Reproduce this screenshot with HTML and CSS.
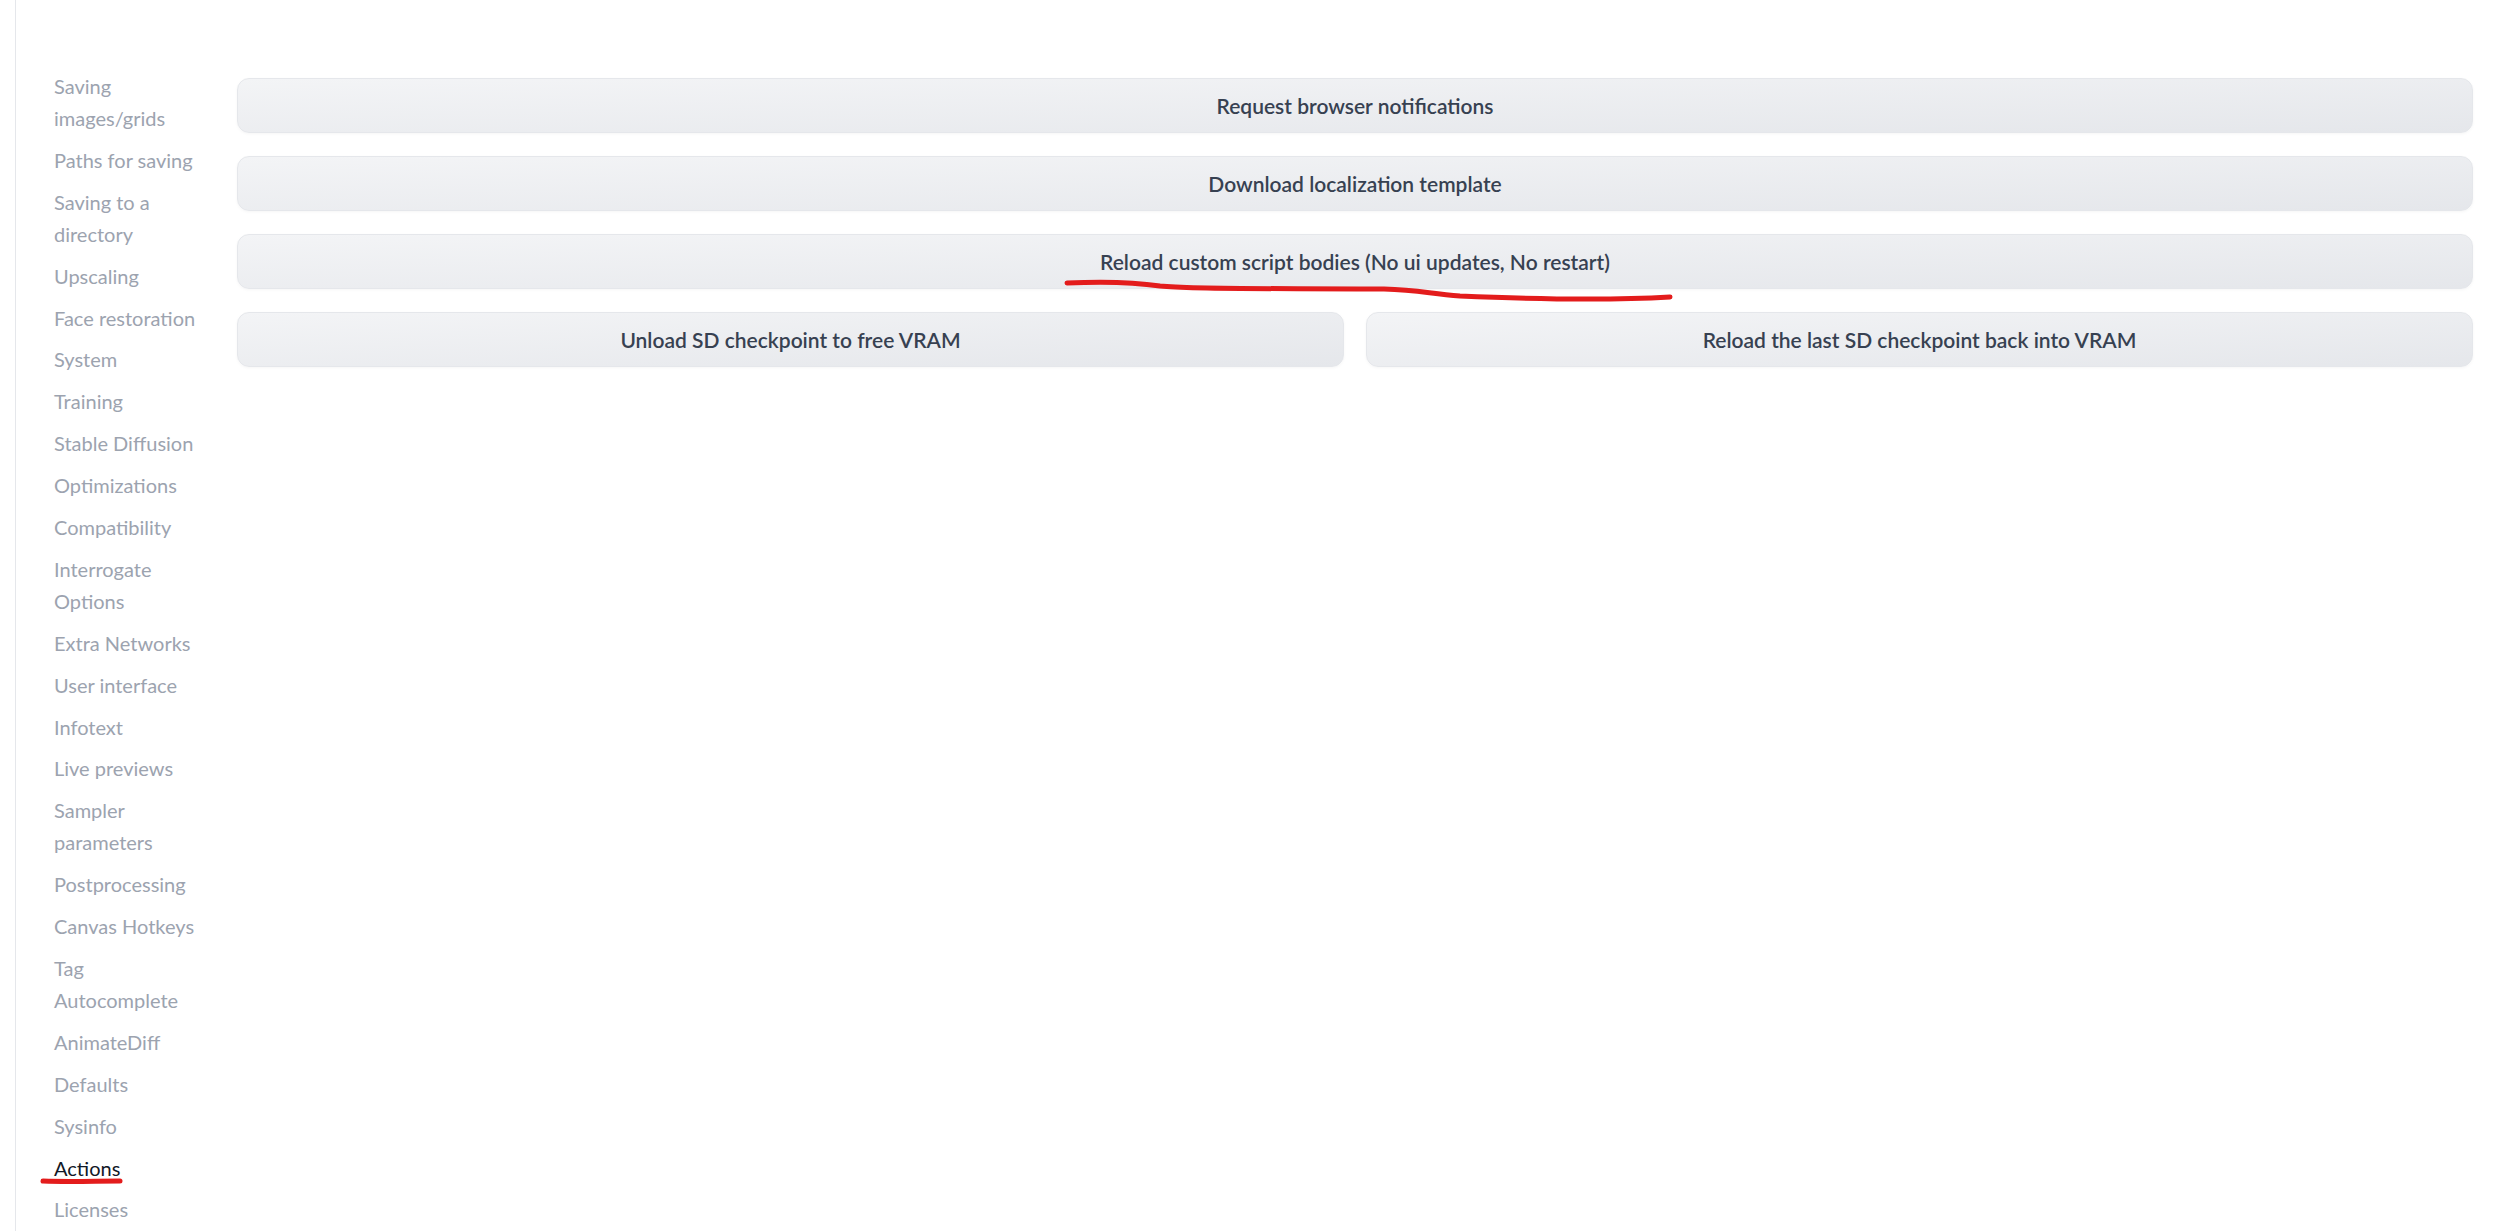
FILE: index.html
```html
<!DOCTYPE html>
<html lang="en">
<head>
    <meta charset="UTF-8">
    <title>Settings - Actions</title>
    <link rel="stylesheet" href="styles.css">
</head>
<body>
    <div class="settings">
        <nav class="settings-nav">
            <a class="nav-item">Saving images/grids</a>
            <a class="nav-item">Paths for saving</a>
            <a class="nav-item">Saving to a directory</a>
            <a class="nav-item">Upscaling</a>
            <a class="nav-item">Face restoration</a>
            <a class="nav-item">System</a>
            <a class="nav-item">Training</a>
            <a class="nav-item">Stable Diffusion</a>
            <a class="nav-item">Optimizations</a>
            <a class="nav-item">Compatibility</a>
            <a class="nav-item">Interrogate Options</a>
            <a class="nav-item">Extra Networks</a>
            <a class="nav-item">User interface</a>
            <a class="nav-item">Infotext</a>
            <a class="nav-item">Live previews</a>
            <a class="nav-item">Sampler parameters</a>
            <a class="nav-item">Postprocessing</a>
            <a class="nav-item">Canvas Hotkeys</a>
            <a class="nav-item">Tag Autocomplete</a>
            <a class="nav-item">AnimateDiff</a>
            <a class="nav-item">Defaults</a>
            <a class="nav-item">Sysinfo</a>
            <a class="nav-item active">Actions</a>
            <a class="nav-item">Licenses</a>
        </nav>

        <main class="actions">
            <button class="btn">Request browser notifications</button>
            <button class="btn">Download localization template</button>
            <button class="btn">Reload custom script bodies (No ui updates, No restart)</button>
            <div class="btn-row">
                <button class="btn">Unload SD checkpoint to free VRAM</button>
                <button class="btn">Reload the last SD checkpoint back into VRAM</button>
            </div>
        </main>
    </div>

    <!-- hand-drawn red marks on top of the screenshot -->
    <svg class="marks" width="2506" height="1231" viewBox="0 0 2506 1231">
        <path d="M1067 283 C1110 281 1140 283 1160 286 C1200 290 1300 288 1384 289 C1420 290 1430 294 1460 296 C1530 299 1600 301 1670 297" />
        <path d="M43 1181 C70 1182 95 1181 120 1181" />
    </svg>
</body>
</html>
```

FILE: styles.css
```css
html {
    overflow: hidden;
}

body {
    margin: 0;
    font-family: Lato, "Noto Sans", sans-serif;
    background-color: #fff;
    color: #374151;
}

.settings {
    display: flex;
    align-items: flex-start;
    margin-left: 15px;
    border-left: 1px solid #e5e7eb;
    min-height: 100vh;
    box-sizing: border-box;
    padding-top: 70px;
}

.settings-nav {
    flex: 0 0 221px;
    min-width: 0;
    box-sizing: border-box;
    padding: 0 33px 0 38px;
    display: flex;
    flex-direction: column;
    gap: 9.9px;
}

.nav-item {
    font-size: 20px;
    line-height: 32px;
    color: #9ca3af;
    cursor: pointer;
}

.nav-item.active {
    color: #111827;
}

.actions {
    flex: 1;
    margin: 8px 33px 0 0;
    display: flex;
    flex-direction: column;
    gap: 23px;
}

.btn {
    height: 55px;
    width: 100%;
    border: 1px solid #e5e7eb;
    border-radius: 12px;
    background: linear-gradient(to bottom right, #f3f4f6, #e5e7eb);
    box-shadow: 0 1px 3px rgba(0, 0, 0, 0.04);
    font-family: Lato, "Noto Sans", sans-serif;
    font-size: 21px;
    font-weight: 600;
    color: #374151;
    cursor: pointer;
}

.btn-row {
    display: grid;
    grid-template-columns: 1fr 1fr;
    gap: 22px;
}

.marks {
    position: absolute;
    top: 0;
    left: 0;
    pointer-events: none;
}

.marks path {
    fill: none;
    stroke: #e31c1c;
    stroke-width: 5;
    stroke-linecap: round;
}
```
